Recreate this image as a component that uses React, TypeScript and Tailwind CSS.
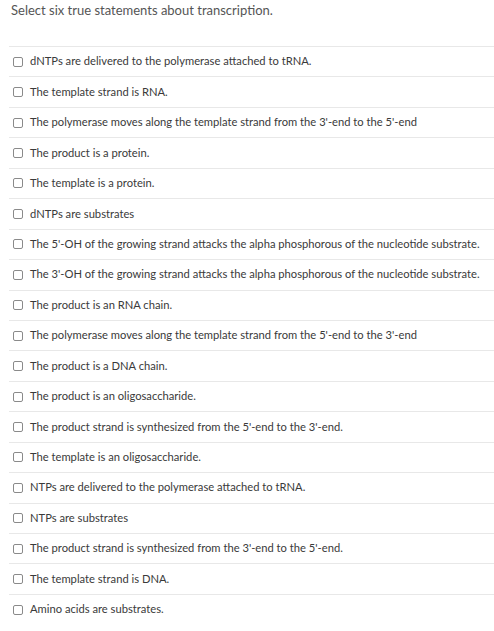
import React from "react";

const items = [
  "dNTPs are delivered to the polymerase attached to tRNA.",
  "The template strand is RNA.",
  "The polymerase moves along the template strand from the 3'-end to the 5'-end",
  "The product is a protein.",
  "The template is a protein.",
  "dNTPs are substrates",
  "The 5'-OH of the growing strand attacks the alpha phosphorous of the nucleotide substrate.",
  "The 3'-OH of the growing strand attacks the alpha phosphorous of the nucleotide substrate.",
  "The product is an RNA chain.",
  "The polymerase moves along the template strand from the 5'-end to the 3'-end",
  "The product is a DNA chain.",
  "The product is an oligosaccharide.",
  "The product strand is synthesized from the 5'-end to the 3'-end.",
  "The template is an oligosaccharide.",
  "NTPs are delivered to the polymerase attached to tRNA.",
  "NTPs are substrates",
  "The product strand is synthesized from the 3'-end to the 5'-end.",
  "The template strand is DNA.",
  "Amino acids are substrates.",
];

export default function App() {
  return (
    <div className="w-[494px] h-[631px] bg-white overflow-hidden" style={{ fontFamily: "Lato, 'Open Sans', sans-serif" }}>
      <div className="pl-[11px] pt-[1px] text-[13px] leading-[18px] text-[#555]">
        Select six true statements about transcription.
      </div>
      <div className="ml-[9px] mt-[27px]">
        {items.map((t, i) => (
          <div key={i} className="h-[30.44px] border-t border-[#e8e8e8] flex items-center pl-[4px] gap-[7px]">
            <span className="w-[10px] h-[10px] border border-[#8a8a8a] rounded-[2px] bg-white shrink-0" />
            <span className="text-[11.2px] text-[#3a3a3a] whitespace-nowrap">{t}</span>
          </div>
        ))}
      </div>
    </div>
  );
}
